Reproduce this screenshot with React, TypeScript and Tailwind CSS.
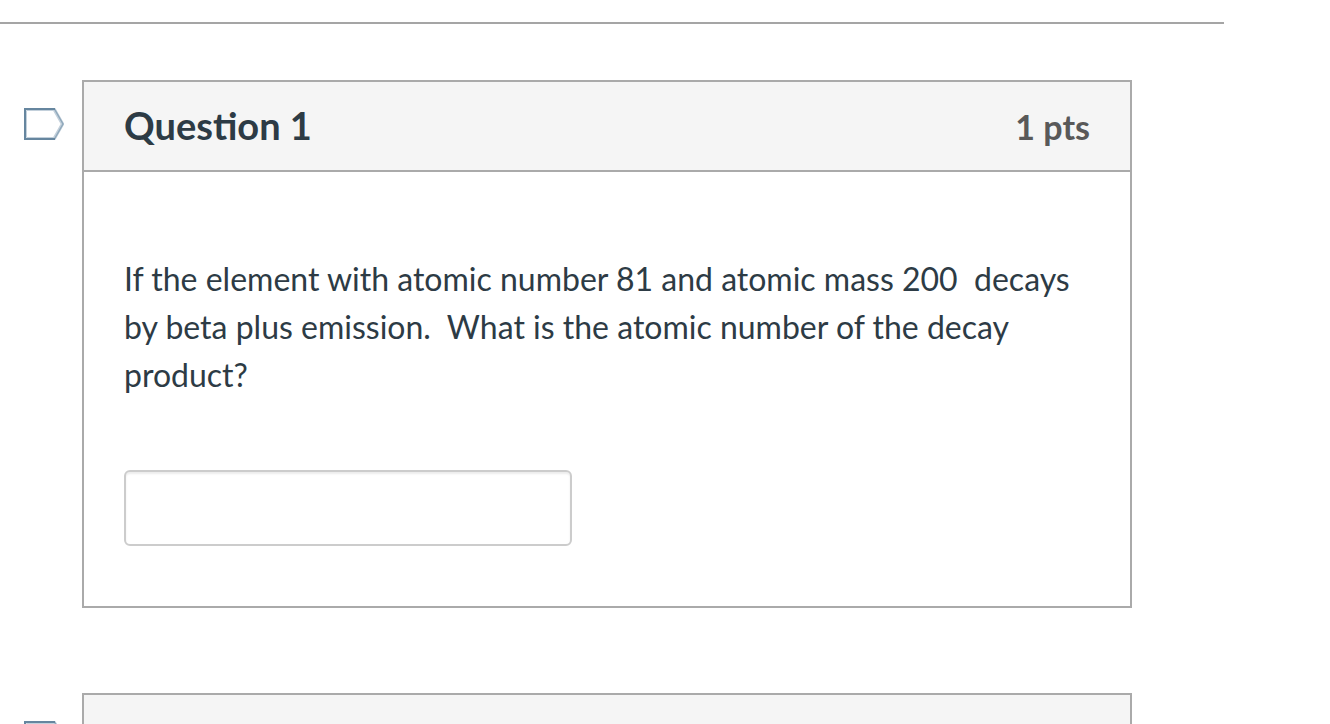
import type { ReactNode } from "react";

type Question = {
  id: number;
  name?: string;
  points?: string;
  text?: string;
};

const questions: Question[] = [
  {
    id: 1,
    name: "Question 1",
    points: "1 pts",
    text: "If the element with atomic number 81 and atomic mass 200\u00a0 decays by beta plus emission.\u00a0 What is the atomic number of the decay product?",
  },
  { id: 2 },
];

function FlagIcon() {
  return (
    <svg viewBox="0 0 40 32" className="h-8 w-10" fill="none" aria-hidden="true">
      <path d="M30 1 L38.5 16 L30 31" stroke="#c3d0db" strokeWidth="3.4" />
      <path d="M30.5 1 L39 16 L30.5 31" stroke="#8fa8bb" strokeWidth="1.4" />
      <path d="M30 2.5 H2.5 V29.5 H30" stroke="#c3d0db" strokeWidth="1" />
      <path d="M31 1 H1 V31 H31" stroke="#66869f" strokeWidth="2" />
    </svg>
  );
}

function QuestionCard({
  question,
  children,
}: {
  question: Question;
  children?: ReactNode;
}) {
  return (
    <div className="flex items-start">
      <button
        type="button"
        aria-label="Flag question"
        className="mt-7 mr-[18px] ml-6 shrink-0"
      >
        <FlagIcon />
      </button>

      <section className="min-w-0 flex-1 border-2 border-[#aaaaaa] bg-white">
        <header className="flex h-[90px] items-baseline justify-between border-b-2 border-[#aaaaaa] bg-[#f5f5f5] px-10 pt-[19px]">
          <h2 className="text-[38px] leading-[48px] font-bold">
            {question.name}
          </h2>
          <span className="text-[34px] leading-[48px] font-bold text-[#595959]">
            {question.points}
          </span>
        </header>
        {children}
      </section>
    </div>
  );
}

export default function App() {
  return (
    <main className="h-screen overflow-hidden bg-white font-['Lato',sans-serif] text-[#2d3b45]">
      <hr className="mt-[22px] mr-[106px] border-t-2 border-[#a5a5a5]" />

      <div className="mt-14 mr-[198px] space-y-[85px]">
        {questions.map((q) => (
          <QuestionCard key={q.id} question={q}>
            {q.text && (
              <div className="px-10 pt-[83px] pb-[60px]">
                <p id={`question-${q.id}`} className="text-[32px] leading-[48px]">
                  {q.text}
                </p>
                <input
                  type="text"
                  aria-labelledby={`question-${q.id}`}
                  className="mt-[71px] block h-[76px] w-[448px] max-w-full rounded-md border-2 border-[#cccccc] bg-white px-3 text-[32px] shadow-[inset_0_2px_2px_rgba(0,0,0,0.075)] outline-none"
                />
              </div>
            )}
          </QuestionCard>
        ))}
      </div>
    </main>
  );
}
